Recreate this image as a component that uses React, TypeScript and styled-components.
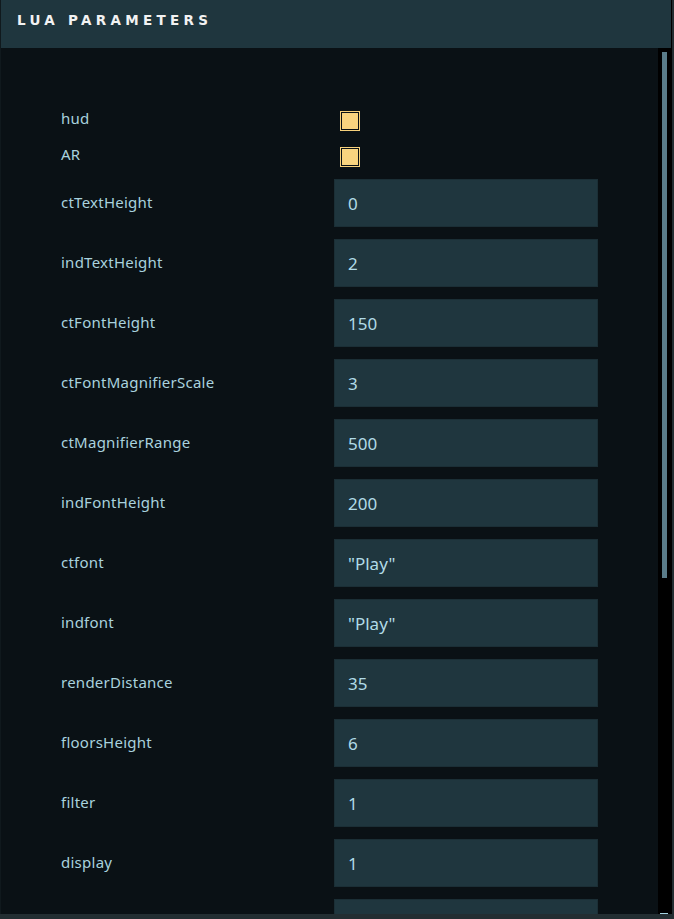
import React from "react";
import styled, { createGlobalStyle } from "styled-components";

const Global = createGlobalStyle`
  html, body { margin: 0; padding: 0; background: #232e32; }
  body { width: 674px; height: 919px; overflow: hidden; font-family: "Noto Sans", "DejaVu Sans", sans-serif; }
`;

const Window = styled.div`
  width: 670px;
  height: 914px;
  border-left: 1px solid #10191d;
  border-right: 1px solid #000;
  display: flex;
  flex-direction: column;
  background: #0a1115;
  overflow: hidden;
`;

const Header = styled.div`
  height: 48px;
  flex: 0 0 48px;
  background: #1f363e;
  display: flex;
  align-items: flex-start;
  padding: 12px 0 0 16px;
  box-sizing: border-box;
`;

const Title = styled.h1`
  margin: 0;
  font-family: "DejaVu Sans", "Liberation Sans", sans-serif;
  font-weight: 700;
  font-size: 13.5px;
  letter-spacing: 4.3px;
  color: #f2f2f2;
  line-height: 16px;
`;

const Body = styled.div`
  flex: 1;
  display: flex;
  min-height: 0;
`;

const Content = styled.div`
  flex: 1;
  overflow: hidden;
  padding: 55px 0 0 60px;
  display: flex;
  flex-direction: column;
`;

const Track = styled.div`
  width: 13px;
  flex: 0 0 13px;
  background: #000;
  position: relative;
`;

const Thumb = styled.div`
  margin: 4px 0 0 4px;
  width: 5px;
  height: 526px;
  background: #5a7c89;
`;

const Grip = styled.div`
  position: absolute;
  left: 2px;
  bottom: 0;
  width: 8px;
  height: 1px;
  background: #a6d4e2;
`;

const Row = styled.div<{ $tall?: boolean }>`
  display: grid;
  grid-template-columns: 273px 264px;
  align-items: center;
  height: ${(p) => (p.$tall ? "60px" : "36px")};
  flex: 0 0 auto;
`;

const Label = styled.span`
  font-size: 15px;
  color: #a9d2de;
  letter-spacing: 0.25px;
  padding-bottom: 6px;
`;

const Check = styled.span`
  margin-left: 6px;
  width: 20px;
  height: 20px;
  box-sizing: border-box;
  border: 1px solid #f7d17c;
  padding: 1px;
  background: #0a1115;
  display: block;
  &::after {
    content: "";
    display: block;
    width: 100%;
    height: 100%;
    background: #f9d47f;
  }
`;

const Field = styled.input`
  width: 264px;
  height: 48px;
  box-sizing: border-box;
  align-self: start;
  margin-top: 4px;
  background: #1f363e;
  border: 1px solid #1b2f36;
  outline: none;
  padding: 0 0 0 13px;
  font-family: "Noto Sans", "DejaVu Sans", sans-serif;
  font-size: 17px;
  color: #b1dbe7;
`;

type P = { name: string; value?: string; check?: boolean };

const params: P[] = [
  { name: "hud", check: true },
  { name: "AR", check: true },
  { name: "ctTextHeight", value: "0" },
  { name: "indTextHeight", value: "2" },
  { name: "ctFontHeight", value: "150" },
  { name: "ctFontMagnifierScale", value: "3" },
  { name: "ctMagnifierRange", value: "500" },
  { name: "indFontHeight", value: "200" },
  { name: "ctfont", value: '"Play"' },
  { name: "indfont", value: '"Play"' },
  { name: "renderDistance", value: "35" },
  { name: "floorsHeight", value: "6" },
  { name: "filter", value: "1" },
  { name: "display", value: "1" },
  { name: "", value: "" },
];

export default function App() {
  return (
    <>
      <Global />
      <Window>
        <Header>
          <Title>LUA PARAMETERS</Title>
        </Header>
        <Body>
          <Content>
            {params.map((p, i) =>
              p.check ? (
                <Row key={i}>
                  <Label>{p.name}</Label>
                  <Check />
                </Row>
              ) : (
                <Row key={i} $tall>
                  <Label>{p.name}</Label>
                  <Field readOnly defaultValue={p.value} />
                </Row>
              )
            )}
          </Content>
          <Track>
            <Thumb />
            <Grip />
          </Track>
        </Body>
      </Window>
    </>
  );
}
